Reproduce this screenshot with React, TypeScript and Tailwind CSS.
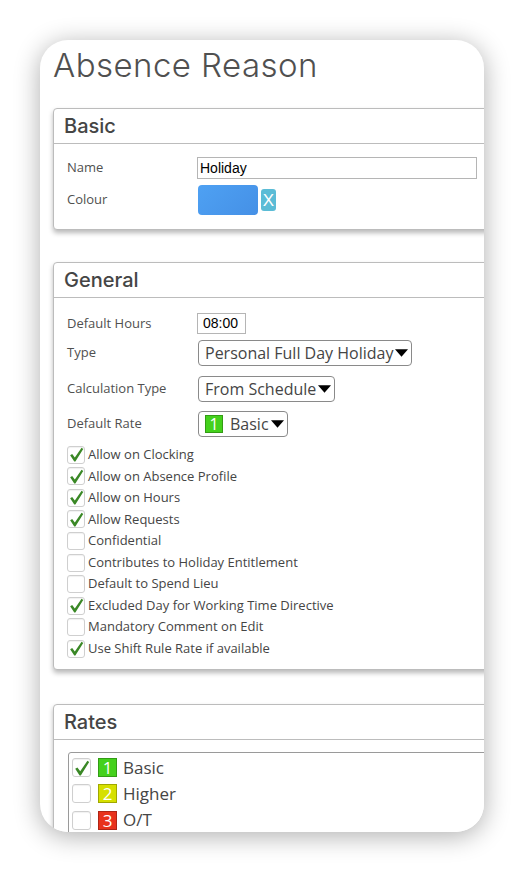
import React from "react";

const OS = { fontFamily: '"Open Sans", "Liberation Sans", sans-serif' };
const HD = { fontFamily: 'Inter, "Open Sans", sans-serif' };

function Tick({ size = 14 }: { size?: number }) {
  return (
    <svg viewBox="0 0 16 16" width={size} height={size}>
      <path d="M1.2 8.8 L3.4 7.4 L6.2 11.2 L13.4 0.8 L15.2 2 L6.8 15.4 L5.6 15.4 Z" fill="#3a8826" />
    </svg>
  );
}

function Box({ checked, big }: { checked?: boolean; big?: boolean }) {
  return (
    <div
      className={
        (big ? "w-[19px] h-[19px]" : "w-[18px] h-[18px]") +
        " shrink-0 rounded-[3px] border border-[#cfcfcf] bg-white flex items-center justify-center shadow-[inset_0_1px_1px_rgba(0,0,0,0.06)]"
      }
    >
      {checked ? <Tick size={big ? 16 : 15} /> : null}
    </div>
  );
}

function Badge({ n, color, big }: { n: string; color: string; big?: boolean }) {
  return (
    <div
      className={
        (big ? "w-[19px] h-[19px] text-[17px]" : "w-[18px] h-[18px] text-[16px]") +
        " shrink-0 flex items-center justify-center text-white leading-none border border-black/25 " +
        color
      }
      style={OS}
    >
      {n}
    </div>
  );
}

function Arrow() {
  return (
    <svg viewBox="0 0 14 8" width="13" height="8" className="shrink-0">
      <path d="M0 0 L14 0 L7 8 Z" fill="#000" />
    </svg>
  );
}

function Panel({ title, children }: { title: string; children: React.ReactNode }) {
  return (
    <div className="w-[470px] rounded-[4px] border border-[#bcbcbc] bg-white shadow-[0_3px_5px_rgba(0,0,0,0.28)]">
      <div className="h-[35px] flex items-center pl-[10px] border-b border-[#bcbcbc]">
        <span className="text-[20px] font-medium text-[#454545] leading-none" style={HD}>
          {title}
        </span>
      </div>
      {children}
    </div>
  );
}

const checks: [string, boolean][] = [
  ["Allow on Clocking", true],
  ["Allow on Absence Profile", true],
  ["Allow on Hours", true],
  ["Allow Requests", true],
  ["Confidential", false],
  ["Contributes to Holiday Entitlement", false],
  ["Default to Spend Lieu", false],
  ["Excluded Day for Working Time Directive", true],
  ["Mandatory Comment on Edit", false],
  ["Use Shift Rule Rate if available", true],
];

const selectCls =
  "h-[26px] inline-flex items-center border border-[#8a8a8a] rounded-[4px] pl-[6px] pr-[3px] text-[16px] text-[#454545]";

export default function App() {
  return (
    <div className="w-[524px] h-[872px] bg-white p-[40px]">
      <div className="w-[444px] h-[792px] rounded-[28px] overflow-hidden bg-white shadow-[0_4px_26px_rgba(0,0,0,0.32)] pl-[13px]">
        <h1
          className="mt-[9px] h-[32px] leading-[32px] text-[33px] font-light text-[#505050] tracking-[0.45px] whitespace-nowrap"
          style={HD}
        >
          Absence Reason
        </h1>

        <div className="mt-[27px]">
          <Panel title="Basic">
            <div className="pt-[13px] pb-[14px] pl-[13px] text-[13px] text-[#505050]" style={OS}>
              <div className="flex items-center h-[22px]">
                <div className="w-[130px]">Name</div>
                <div
                  className="w-[280px] h-[22px] border border-[#b5b5b5] flex items-center pl-[2px] text-[14px] text-black"
                  style={{ fontFamily: '"Liberation Sans", Arial, sans-serif' }}
                >
                  Holiday
                </div>
              </div>
              <div className="flex items-center h-[30px] mt-[6px]">
                <div className="w-[131px]">Colour</div>
                <div className="w-[60px] h-[30px] rounded-[4px] bg-[linear-gradient(135deg,#4ea1f3,#4590e6)]" />
                <div
                  className="ml-[3px] w-[15px] h-[22px] rounded-[3px] bg-[#5bbcd6] text-white flex items-center justify-center text-[17px] leading-none"
                  style={{ fontFamily: '"Liberation Sans", Arial, sans-serif' }}
                >
                  X
                </div>
              </div>
            </div>
          </Panel>
        </div>

        <div className="mt-[32px]">
          <Panel title="General">
            <div className="pt-[15px] pb-[10px] pl-[13px] text-[13px] text-[#505050]" style={OS}>
              <div className="flex items-center h-[21px]">
                <div className="w-[130px]">Default Hours</div>
                <div
                  className="w-[49px] h-[21px] border border-[#b5b5b5] flex items-center pl-[5px] text-[14px] text-black"
                  style={{ fontFamily: '"Liberation Sans", Arial, sans-serif' }}
                >
                  08:00
                </div>
              </div>
              <div className="flex items-center h-[26px] mt-[6px]">
                <div className="w-[131px]">Type</div>
                <div className={selectCls}>
                  <span className="whitespace-nowrap mr-[2px]">Personal Full Day Holiday</span>
                  <Arrow />
                </div>
              </div>
              <div className="flex items-center h-[26px] mt-[10px]">
                <div className="w-[131px]">Calculation Type</div>
                <div className={selectCls}>
                  <span className="whitespace-nowrap mr-[2px]">From Schedule</span>
                  <Arrow />
                </div>
              </div>
              <div className="flex items-center h-[26px] mt-[9px]">
                <div className="w-[131px]">Default Rate</div>
                <div className={selectCls}>
                  <Badge n="1" color="bg-[#44d11c]" />
                  <span className="ml-[7px] mr-[2px] whitespace-nowrap">Basic</span>
                  <Arrow />
                </div>
              </div>
              <div className="mt-[7px]">
                {checks.map(([label, on]) => (
                  <div key={label} className="flex items-center h-[21.55px] gap-[3px]">
                    <Box checked={on} />
                    <span className="text-[#454545] whitespace-nowrap">{label}</span>
                  </div>
                ))}
              </div>
            </div>
          </Panel>
        </div>

        <div className="mt-[34px]">
          <Panel title="Rates">
            <div className="pt-[12px] pl-[14px]" style={OS}>
              <div className="border border-[#9a9a9a] rounded-tl-[3px] pl-[3px] pt-[1px] h-[120px]">
                {[
                  ["1", "Basic", "bg-[#44d11c]", true],
                  ["2", "Higher", "bg-[#d6e000]", false],
                  ["3", "O/T", "bg-[#e8321c]", false],
                ].map(([n, label, color, on]) => (
                  <div key={n as string} className="flex items-center h-[26.3px]">
                    <Box big checked={on as boolean} />
                    <div className="ml-[7px]">
                      <Badge big n={n as string} color={color as string} />
                    </div>
                    <span className="ml-[6px] text-[17px] text-[#454545] whitespace-nowrap">{label as string}</span>
                  </div>
                ))}
              </div>
            </div>
          </Panel>
        </div>
      </div>
    </div>
  );
}
